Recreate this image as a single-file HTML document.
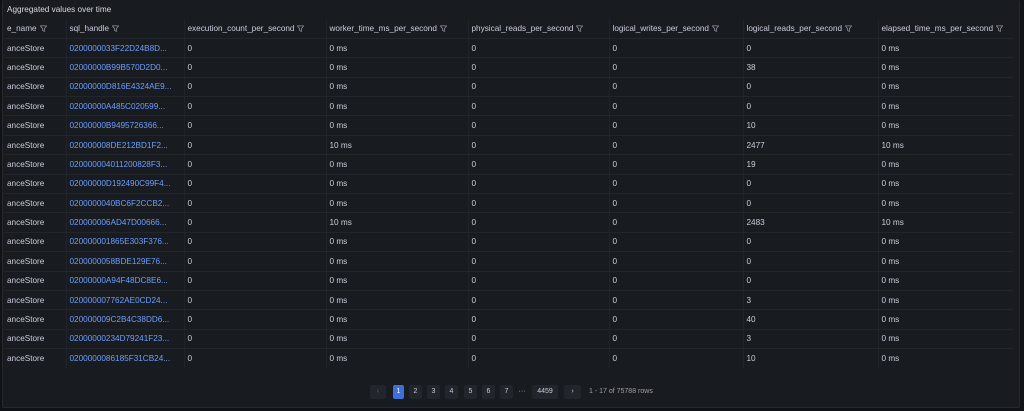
<!DOCTYPE html>
<html><head><style>
*{margin:0;padding:0;box-sizing:border-box}
body{width:1024px;height:411px;background:#111217;font-family:"Liberation Sans",sans-serif;font-size:8.2px;color:#ccccdc;overflow:hidden;position:relative}
.panel{position:absolute;left:2px;top:0;width:1018px;height:408px;background:#181b1f;border:1px solid #25282d;border-top:none;border-radius:2px}
.title{position:absolute;left:7px;top:5px;font-size:8.2px;color:#d8d9e0}
table{position:absolute;left:4px;top:19px;border-collapse:collapse;table-layout:fixed;width:1009px}
td,th{height:19.4px;padding:0 0 0 3px;text-align:left;white-space:nowrap;overflow:hidden;border-right:1px solid #202328;font-weight:normal}
th{color:#ccccdc;border-bottom:1px solid #22252a}
tr td{border-bottom:1px solid #22252a}
tr:last-child td{border-bottom:none}
td:last-child,th:last-child{border-right:none}
.l{color:#6e9fff}
.f{display:inline-block;width:7px;height:7px;vertical-align:-1px;margin-left:3px}
.pg{position:absolute;top:385px;height:14px;border-radius:2px;background:#22252b;color:#ccccdc;font-size:7px;text-align:center;line-height:14px}
</style></head><body>
<div class="panel"></div>
<div class="title">Aggregated values over time</div>
<table>
<colgroup><col style="width:62px"><col style="width:118px"><col style="width:142px"><col style="width:142px"><col style="width:141px"><col style="width:134px"><col style="width:135px"><col style="width:135px"></colgroup>
<tr><th>e_name<svg class="f" viewBox="0 0 8 8"><path d="M0.5 1h7L5 4.3v3L3 6.3V4.3z" fill="none" stroke="#8e8e9a" stroke-width="0.9"/></svg></th><th>sql_handle<svg class="f" viewBox="0 0 8 8"><path d="M0.5 1h7L5 4.3v3L3 6.3V4.3z" fill="none" stroke="#8e8e9a" stroke-width="0.9"/></svg></th><th>execution_count_per_second<svg class="f" viewBox="0 0 8 8"><path d="M0.5 1h7L5 4.3v3L3 6.3V4.3z" fill="none" stroke="#8e8e9a" stroke-width="0.9"/></svg></th><th>worker_time_ms_per_second<svg class="f" viewBox="0 0 8 8"><path d="M0.5 1h7L5 4.3v3L3 6.3V4.3z" fill="none" stroke="#8e8e9a" stroke-width="0.9"/></svg></th><th>physical_reads_per_second<svg class="f" viewBox="0 0 8 8"><path d="M0.5 1h7L5 4.3v3L3 6.3V4.3z" fill="none" stroke="#8e8e9a" stroke-width="0.9"/></svg></th><th>logical_writes_per_second<svg class="f" viewBox="0 0 8 8"><path d="M0.5 1h7L5 4.3v3L3 6.3V4.3z" fill="none" stroke="#8e8e9a" stroke-width="0.9"/></svg></th><th>logical_reads_per_second<svg class="f" viewBox="0 0 8 8"><path d="M0.5 1h7L5 4.3v3L3 6.3V4.3z" fill="none" stroke="#8e8e9a" stroke-width="0.9"/></svg></th><th>elapsed_time_ms_per_second<svg class="f" viewBox="0 0 8 8"><path d="M0.5 1h7L5 4.3v3L3 6.3V4.3z" fill="none" stroke="#8e8e9a" stroke-width="0.9"/></svg></th></tr>
<tr><td>anceStore</td><td class="l">0200000033F22D24B8D...</td><td>0</td><td>0 ms</td><td>0</td><td>0</td><td>0</td><td>0 ms</td></tr>
<tr><td>anceStore</td><td class="l">02000000B99B570D2D0...</td><td>0</td><td>0 ms</td><td>0</td><td>0</td><td>38</td><td>0 ms</td></tr>
<tr><td>anceStore</td><td class="l">02000000D816E4324AE9...</td><td>0</td><td>0 ms</td><td>0</td><td>0</td><td>0</td><td>0 ms</td></tr>
<tr><td>anceStore</td><td class="l">02000000A485C020599...</td><td>0</td><td>0 ms</td><td>0</td><td>0</td><td>0</td><td>0 ms</td></tr>
<tr><td>anceStore</td><td class="l">02000000B9495726366...</td><td>0</td><td>0 ms</td><td>0</td><td>0</td><td>10</td><td>0 ms</td></tr>
<tr><td>anceStore</td><td class="l">020000008DE212BD1F2...</td><td>0</td><td>10 ms</td><td>0</td><td>0</td><td>2477</td><td>10 ms</td></tr>
<tr><td>anceStore</td><td class="l">020000004011200828F3...</td><td>0</td><td>0 ms</td><td>0</td><td>0</td><td>19</td><td>0 ms</td></tr>
<tr><td>anceStore</td><td class="l">02000000D192490C99F4...</td><td>0</td><td>0 ms</td><td>0</td><td>0</td><td>0</td><td>0 ms</td></tr>
<tr><td>anceStore</td><td class="l">0200000040BC6F2CCB2...</td><td>0</td><td>0 ms</td><td>0</td><td>0</td><td>0</td><td>0 ms</td></tr>
<tr><td>anceStore</td><td class="l">020000006AD47D00666...</td><td>0</td><td>10 ms</td><td>0</td><td>0</td><td>2483</td><td>10 ms</td></tr>
<tr><td>anceStore</td><td class="l">020000001865E303F376...</td><td>0</td><td>0 ms</td><td>0</td><td>0</td><td>0</td><td>0 ms</td></tr>
<tr><td>anceStore</td><td class="l">0200000058BDE129E76...</td><td>0</td><td>0 ms</td><td>0</td><td>0</td><td>0</td><td>0 ms</td></tr>
<tr><td>anceStore</td><td class="l">02000000A94F48DC8E6...</td><td>0</td><td>0 ms</td><td>0</td><td>0</td><td>0</td><td>0 ms</td></tr>
<tr><td>anceStore</td><td class="l">020000007762AE0CD24...</td><td>0</td><td>0 ms</td><td>0</td><td>0</td><td>3</td><td>0 ms</td></tr>
<tr><td>anceStore</td><td class="l">020000009C2B4C38DD6...</td><td>0</td><td>0 ms</td><td>0</td><td>0</td><td>40</td><td>0 ms</td></tr>
<tr><td>anceStore</td><td class="l">02000000234D79241F23...</td><td>0</td><td>0 ms</td><td>0</td><td>0</td><td>3</td><td>0 ms</td></tr>
<tr><td>anceStore</td><td class="l">0200000086185F31CB24...</td><td>0</td><td>0 ms</td><td>0</td><td>0</td><td>10</td><td>0 ms</td></tr>
</table>
<div class="pg" style="left:370px;width:16px;color:#666">‹</div>
<div class="pg" style="left:393px;width:11px;background:#3d71d9;color:#fff">1</div>
<div class="pg" style="left:409px;width:13px">2</div>
<div class="pg" style="left:427px;width:13px">3</div>
<div class="pg" style="left:445px;width:13px">4</div>
<div class="pg" style="left:464px;width:13px">5</div>
<div class="pg" style="left:482px;width:13px">6</div>
<div class="pg" style="left:500px;width:13px">7</div>
<div class="pg" style="left:516px;width:12px;background:none">···</div>
<div class="pg" style="left:532px;width:26px">4459</div>
<div class="pg" style="left:564px;width:17px">›</div>
<div style="position:absolute;left:589px;top:388px;font-size:7px;color:#9fa0a8">1 - 17 of 75788 rows</div>
</body></html>
